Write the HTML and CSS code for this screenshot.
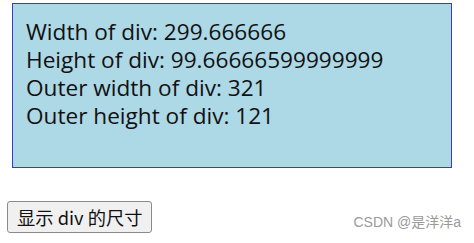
FILE: index.html
```html
<!DOCTYPE html>
<html lang="zh">
<head>
  <meta charset="UTF-8" />
  <title>div 尺寸</title>
  <link rel="stylesheet" href="styles.css">
</head>
<body>
  <div id="box">
    <p>Width of div: 299.666666</p>
    <p>Height of div: 99.66666599999999</p>
    <p>Outer width of div: 321</p>
    <p>Outer height of div: 121</p>
  </div>
  <div class="footer">
    <button id="show-btn">显示 div 的尺寸</button>
    <span class="mark">CSDN @是洋洋a</span>
  </div>
</body>
</html>
```

FILE: styles.css
```css
body {
  margin: 0;
  padding: 3px 13px 0 12px;
  font-family: "Open Sans", "Noto Sans CJK SC", sans-serif;
  background: #fff;
}
#box {
  box-sizing: border-box;
  width: 440px;
  height: 165px;
  background: #add8e6;
  border: 1px solid #3a3ad0;
  padding: 14px 13px;
  font-size: 22.6px;
  line-height: 28px;
  color: #111;
}
#box p { margin: 0; }
.footer {
  display: flex;
  justify-content: space-between;
  align-items: flex-end;
  margin: 33px 0 0 -5px;
}
#show-btn {
  font-family: "Noto Sans CJK SC", sans-serif;
  font-size: 18.3px;
  padding: 0 9px;
  height: 32px;
  background: #f0f0f0;
  border: 1px solid #8a8a8a;
  border-radius: 3px;
  color: #111;
}
.mark {
  font-family: "Liberation Sans", "Noto Sans CJK SC", sans-serif;
  font-size: 14px;
  color: #9a9a9a;
  margin: 0 0 2px 0;
}
```
